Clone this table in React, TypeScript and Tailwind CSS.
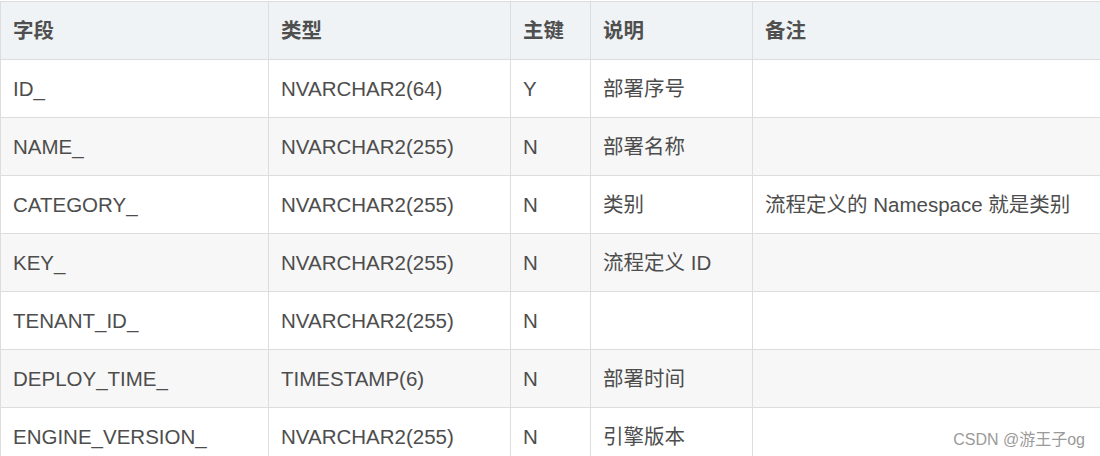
import React from "react";

const rows: string[][] = [
  ["ID_", "NVARCHAR2(64)", "Y", "部署序号", ""],
  ["NAME_", "NVARCHAR2(255)", "N", "部署名称", ""],
  ["CATEGORY_", "NVARCHAR2(255)", "N", "类别", "流程定义的 Namespace 就是类别"],
  ["KEY_", "NVARCHAR2(255)", "N", "流程定义 ID", ""],
  ["TENANT_ID_", "NVARCHAR2(255)", "N", "", ""],
  ["DEPLOY_TIME_", "TIMESTAMP(6)", "N", "部署时间", ""],
  ["ENGINE_VERSION_", "NVARCHAR2(255)", "N", "引擎版本", ""],
];

const headers = ["字段", "类型", "主键", "说明", "备注"];

const font = {
  fontFamily: '"Liberation Sans", Arial, "Noto Sans CJK SC", sans-serif',
};

export default function App() {
  return (
    <div className="relative w-[1100px] h-[456px] overflow-hidden bg-white" style={font}>
      <div className="pt-px">
        <div className="grid grid-cols-[268px_242px_80px_162px_349px] border-t border-[#dddddd] w-[1101px]">
          {headers.map((h) => (
            <div
              key={h}
              className="h-[58px] border-l border-b border-[#dddddd] bg-[#eff3f5] pl-[12px] pt-[2px] flex items-center text-[20.5px] font-bold text-[#4f4f4f]"
            >
              {h}
            </div>
          ))}
          {rows.map((r, ri) =>
            r.map((c, ci) => (
              <div
                key={`${ri}-${ci}`}
                className={`h-[58px] border-l border-b border-[#dddddd] pl-[12px] pt-[2px] flex items-center text-[20.5px] text-[#4d4d4d] whitespace-nowrap ${
                  ri % 2 === 1 ? "bg-[#f7f7f7]" : "bg-white"
                }`}
              >
                {c}
              </div>
            ))
          )}
        </div>
      </div>
      <div className="absolute right-[15px] bottom-[8px] text-[16px] text-[#9a9a9a] leading-none">
        CSDN @游王子og
      </div>
    </div>
  );
}
